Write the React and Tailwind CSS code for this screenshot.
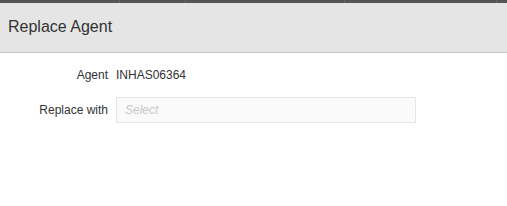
export default function App() {
  return (
    <div className="w-[507px] h-[206px] bg-white font-['Liberation_Sans',Arial,sans-serif] text-[#333]">
      <div className="h-[3px] bg-[#555] flex">
        <div className="w-[120px] border-r border-[#6a6a6a]" />
        <div className="w-[66px] border-r border-[#6a6a6a]" />
        <div className="w-[159px] border-r border-[#6a6a6a]" />
        <div className="w-[152px] border-r border-[#6a6a6a]" />
      </div>
      <div className="h-[50px] bg-[#e5e5e5] border-b border-[#c4c4c4] flex items-center pl-[8px]">
        <h1 className="text-[16px] text-[#333] leading-none pb-[2px]">Replace Agent</h1>
      </div>
      <div className="pt-[15px] flex flex-col gap-[15px] text-[12px] leading-[14px]">
        <div className="flex items-center">
          <div className="w-[108px] text-right">Agent</div>
          <div className="ml-[8px]">INHAS06364</div>
        </div>
        <div className="flex items-center">
          <div className="w-[108px] text-right">Replace with</div>
          <div className="ml-[8px] w-[300px] h-[26px] bg-[#fafafa] border border-[#e6e6e6] flex items-center pl-[8px]">
            <span className="italic text-[#c8c8c8]">Select</span>
          </div>
        </div>
      </div>
    </div>
  )
}
